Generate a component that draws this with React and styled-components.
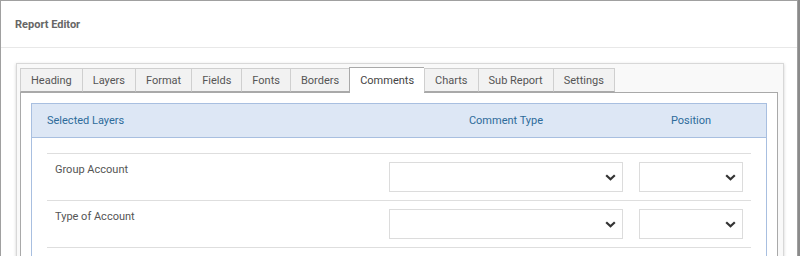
import styled, { createGlobalStyle } from "styled-components"

const GlobalStyle = createGlobalStyle`
    body {
        margin: 0;
        background: #8a8a8a;
        font-family: Roboto, "Liberation Sans", Arial, sans-serif;
    }
`;

const tabs = ["Heading", "Layers", "Format", "Fields", "Fonts", "Borders", "Comments", "Charts", "Sub Report", "Settings"];
const layers = ["Group Account", "Type of Account"];

const Chevron = () => (
    <svg width="11" height="7" viewBox="0 0 11 7">
        <path d="M1.2 1.2 L5.5 5.3 L9.8 1.2" fill="none" stroke="#333" strokeWidth="2.2" />
    </svg>
);

const App = () => {
    return (
        <>
            <GlobalStyle />
            <Modal>
                <Header>Report Editor</Header>
                <Body>
                    <Box>
                        <TabBar>
                            {tabs.map((t) => (
                                <Tab key={t} $active={t === "Comments"}>{t}</Tab>
                            ))}
                        </TabBar>
                        <Panel>
                            <Table>
                                <HeadRow>
                                    <HeadCell>Selected Layers</HeadCell>
                                    <HeadCell $center>Comment Type</HeadCell>
                                    <HeadCell $center>Position</HeadCell>
                                </HeadRow>
                                <TableBody>
                                    {layers.map((l) => (
                                        <Row key={l}>
                                            <Label>{l}</Label>
                                            <Select><Chevron /></Select>
                                            <Select><Chevron /></Select>
                                        </Row>
                                    ))}
                                </TableBody>
                            </Table>
                        </Panel>
                    </Box>
                </Body>
            </Modal>
        </>
    )
};

const Modal = styled.div`
    box-sizing: border-box;
    height: 256px;
    margin: 0 2px 0 0;
    background: #fff;
    border: 1px solid #a0a0a0;
    border-bottom: none;
    overflow: hidden;
`;

const Header = styled.div`
    height: 46px;
    display: flex;
    align-items: center;
    padding-left: 14px;
    font-size: 11px;
    font-weight: 700;
    color: #666;
    border-bottom: 1px solid #e8e8e8;
`;

const Body = styled.div`
    padding: 15px 13px 0 15px;
`;

const Box = styled.div`
    border: 1px solid #d8d8d8;
    background: #f9f9f9;
    box-shadow: 0 1px 3px rgba(0, 0, 0, 0.18);
    padding: 3px 5px 0 3px;
    height: 260px;
`;

const TabBar = styled.div`
    display: flex;
    align-items: flex-end;
    height: 25px;
`;

const Tab = styled.div`
    box-sizing: border-box;
    height: ${(p) => (p.$active ? "26px" : "24px")};
    margin-bottom: ${(p) => (p.$active ? "-1px" : "0")};
    padding: 0 10px;
    display: flex;
    align-items: center;
    font-size: 11px;
    color: ${(p) => (p.$active ? "#444" : "#555")};
    background: ${(p) => (p.$active ? "#fff" : "#f2f2f2")};
    border: 1px solid ${(p) => (p.$active ? "#a9a9a9" : "#cfcfcf")};
    border-bottom: ${(p) => (p.$active ? "none" : "1px solid #a9a9a9")};
    border-right: none;
    position: relative;
    z-index: ${(p) => (p.$active ? 1 : 0)};
    &:last-child {
        border-right: 1px solid #cfcfcf;
    }
    &:nth-child(8) {
        border-left-color: #cfcfcf;
    }
`;

const Panel = styled.div`
    border: 1px solid #a9a9a9;
    background: #fff;
    padding: 10px;
    height: 200px;
`;

const Table = styled.div`
    border: 1px solid #a8bfe0;
    height: 100%;
`;

const HeadRow = styled.div`
    height: 33px;
    display: grid;
    grid-template-columns: 1fr 234px 104px;
    column-gap: 16px;
    align-items: center;
    padding: 0 23px 0 15px;
    background: #dde7f5;
    border-bottom: 1px solid #a8bfe0;
`;

const HeadCell = styled.div`
    font-size: 11px;
    color: #2d6b9a;
    text-align: ${(p) => (p.$center ? "center" : "left")};
`;

const TableBody = styled.div`
    padding: 15px 15px 0;
`;

const Row = styled.div`
    display: grid;
    grid-template-columns: 1fr 234px 104px;
    column-gap: 16px;
    padding: 8px 8px;
    border-top: 1px solid #dedede;
    &:last-child {
        border-bottom: 1px solid #dedede;
    }
`;

const Label = styled.div`
    font-size: 11px;
    color: #555;
    line-height: 14px;
    padding-top: 1px;
`;

const Select = styled.div`
    box-sizing: border-box;
    height: 30px;
    border: 1px solid #dcdcdc;
    background: #fff;
    display: flex;
    align-items: center;
    justify-content: flex-end;
    padding-right: 6px;
`;

export default App;
